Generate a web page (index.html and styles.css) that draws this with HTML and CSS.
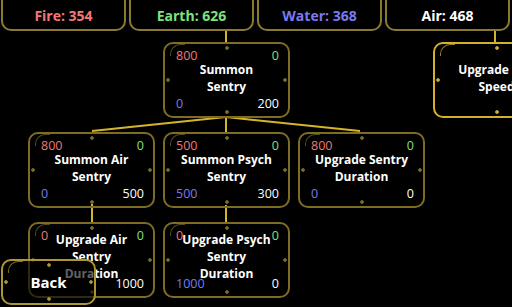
FILE: index.html
```html
<!DOCTYPE html>
<html>
<head>
<meta charset="utf-8">
<link rel="stylesheet" href="styles.css">
</head>
<body>
<div class="stage">
  <svg class="links" width="512" height="307" viewBox="0 0 512 307">
    <g stroke="#d6b42a" stroke-width="2" fill="none">
      <line x1="226" y1="30" x2="226" y2="42"/>
      <line x1="495" y1="30" x2="495" y2="42"/>
      <line x1="226" y1="116" x2="226" y2="132"/>
      <line x1="226" y1="117" x2="92" y2="131"/>
      <line x1="226" y1="117" x2="360" y2="131"/>
      <line x1="92" y1="204" x2="92" y2="222"/>
      <line x1="226" y1="205" x2="226" y2="222"/>
    </g>
  </svg>

  <header class="resources">
    <div class="res fire">Fire: 354</div>
    <div class="res earth">Earth: 626</div>
    <div class="res water">Water: 368</div>
    <div class="res air">Air: 468</div>
  </header>

  <main class="tree">
    <div class="node c2 r1">
      <span class="n tl fire">800</span><span class="n tr earth">0</span>
      <span class="title">Summon<br>Sentry</span>
      <span class="n bl water">0</span><span class="n br">200</span>
    </div>
    <div class="node c4 r1 lit">
      <span class="title">Upgrade Fire<br>Speed</span>
    </div>

    <div class="node c1 r2">
      <span class="n tl fire">800</span><span class="n tr earth">0</span>
      <span class="title">Summon Air<br>Sentry</span>
      <span class="n bl water">0</span><span class="n br">500</span>
    </div>
    <div class="node c2 r2">
      <span class="n tl fire">500</span><span class="n tr earth">0</span>
      <span class="title">Summon Psych<br>Sentry</span>
      <span class="n bl water">500</span><span class="n br">300</span>
    </div>
    <div class="node c3 r2">
      <span class="n tl fire">800</span><span class="n tr earth">0</span>
      <span class="title">Upgrade Sentry<br>Duration</span>
      <span class="n bl water">0</span><span class="n br">0</span>
    </div>

    <div class="node c1 r3">
      <span class="n tl fire">0</span><span class="n tr earth">0</span>
      <span class="title t3">Upgrade Air<br>Sentry<br>Duration</span>
      <span class="n bl water">0</span><span class="n br">1000</span>
    </div>
    <div class="node c2 r3">
      <span class="n tl fire">0</span><span class="n tr earth">0</span>
      <span class="title t3">Upgrade Psych<br>Sentry<br>Duration</span>
      <span class="n bl water">1000</span><span class="n br">0</span>
    </div>
  </main>

  <button class="back">Back</button>
</div>
</body>
</html>
```

FILE: styles.css
```css
html, body {
  margin: 0;
  padding: 0;
  background: #000;
  overflow: hidden;
}

.stage {
  position: relative;
  width: 512px;
  height: 307px;
  overflow: hidden;
  background: #000;
  font-family: "Open Sans", "DejaVu Sans", sans-serif;
  color: #fff;
}

.links {
  position: absolute;
  left: 0;
  top: 0;
}

.fire { color: #f27878; }
.earth { color: #7fe07f; }
.water { color: #7a7af0; }
.air { color: #ffffff; }

.resources {
  display: flex;
  gap: 3px;
  padding-left: 1px;
  margin-top: -12px;
  position: relative;
}

.res {
  box-sizing: border-box;
  width: 125px;
  height: 43px;
  padding-top: 12px;
  border: 2px solid #8a7a2e;
  border-radius: 0 0 10px 10px;
  display: flex;
  align-items: center;
  justify-content: center;
  font-weight: 700;
  font-size: 14px;
}

.tree {
  position: relative;
  display: grid;
  grid-template-columns: repeat(4, 127px);
  grid-template-rows: repeat(3, 76px);
  column-gap: 8px;
  row-gap: 14px;
  padding-left: 28px;
  margin-top: 11px;
}

.c1 { grid-column: 1; }
.c2 { grid-column: 2; }
.c3 { grid-column: 3; }
.c4 { grid-column: 4; }
.r1 { grid-row: 1; }
.r2 { grid-row: 2; }
.r3 { grid-row: 3; }

.node, .back {
  --frame: #7d6d24;
  --dot: radial-gradient(circle, var(--frame) 1.4px, transparent 2.2px);
  position: relative;
  box-sizing: border-box;
  border: 2px solid var(--frame);
  border-radius: 10px;
  background:
    var(--dot) center top 3px / 6px 6px no-repeat,
    var(--dot) center bottom 3px / 6px 6px no-repeat,
    var(--dot) left 2px center / 6px 6px no-repeat,
    var(--dot) right 2px center / 6px 6px no-repeat;
  background-origin: border-box;
}

.node::before, .back::before {
  content: "";
  position: absolute;
  left: 5px;
  top: 0;
  width: 14px;
  height: 11px;
  border-top: 1px solid var(--frame);
  border-left: 1px solid var(--frame);
  border-top-left-radius: 10px;
  opacity: 0.7;
}

.node {
  display: flex;
  align-items: center;
  justify-content: center;
  padding: 0 6px 4px;
  text-align: center;
}

.node.lit {
  --frame: #d2b22a;
}

.title {
  font-weight: 700;
  font-size: 12px;
  line-height: 17px;
  white-space: nowrap;
}

.title.t3 {
  margin-top: -4px;
}

.n {
  position: absolute;
  font-size: 12.5px;
  line-height: 16px;
}
.tl { top: 4px; left: 11px; }
.tr { top: 4px; right: 9px; }
.bl { bottom: 4px; left: 11px; }
.br { bottom: 4px; right: 9px; }

.back {
  --frame: #b09632;
  position: absolute;
  left: 1px;
  top: 259px;
  width: 95px;
  height: 46px;
  margin: 0;
  padding: 0;
  background-color: rgba(0, 0, 0, 0.62);
  color: #fff;
  font-family: "Open Sans", "DejaVu Sans", sans-serif;
  font-weight: 700;
  font-size: 15px;
  cursor: pointer;
}
```
